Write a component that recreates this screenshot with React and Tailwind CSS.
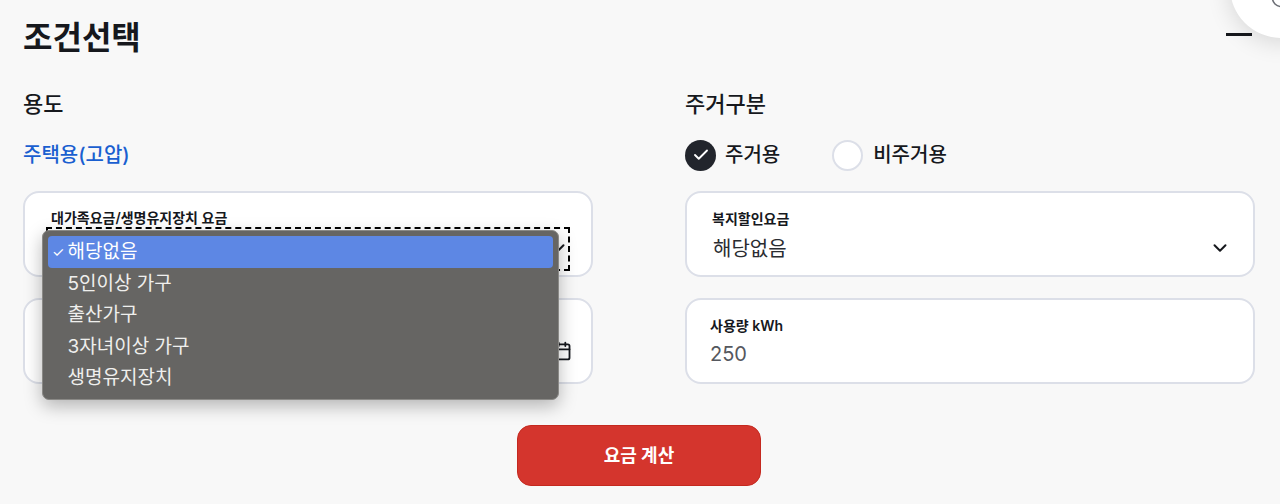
import React from "react";
import { ChevronDown, Calendar, Check } from "lucide-react";

const items = ["해당없음", "5인이상 가구", "출산가구", "3자녀이상 가구", "생명유지장치"];

function Card({ label, children, icon, labelClass }) {
    return (
        <div className="relative h-[86px] rounded-[16px] border-2 border-[#dcdfe8] bg-white">
            <div className={"absolute text-[14px] font-semibold leading-[18px] text-[#16181d] " + labelClass}>
                {label}
            </div>
            {children}
            {icon}
        </div>
    );
}

function Popup() {
    return (
        <div className="absolute left-[19px] top-[39px] z-10 h-[170px] w-[517px] rounded-[7px] border border-[#8a8986] bg-[#666563] p-[5px] shadow-[0_6px_18px_rgba(0,0,0,0.28)]">
            {items.map((item, i) => (
                <div
                    key={item}
                    className={
                        i === 0
                            ? "relative h-[32px] rounded-[4px] bg-[#5d87e4] pl-[19.5px] text-[19px] leading-[31px] text-white"
                            : "h-[31.3px] pl-[19.5px] text-[19px] leading-[31px] text-[#efefed]"
                    }
                >
                    {i === 0 && <span className="absolute left-[4px] top-0 text-[14px]">✓</span>}
                    {item}
                </div>
            ))}
        </div>
    );
}

export default function App() {
    return (
        <div
            className="relative h-[504px] w-[1280px] overflow-hidden bg-[#f8f8f8] pl-[23px] pr-[25px] text-[#16181d]"
            style={{ fontFamily: '"Inter", "Noto Sans CJK KR", sans-serif' }}
        >
            {/* floating button at the corner */}
            <div className="absolute left-[1230px] top-[-64px] flex h-[102px] w-[102px] rounded-full bg-white shadow-[0_4px_24px_rgba(0,0,0,0.14)]">
                <svg className="absolute left-[41px] top-[53px]" width="20" height="20" viewBox="0 0 20 20" fill="none">
                    <circle cx="10" cy="9" r="8.5" stroke="#6b6e75" strokeWidth="1.6" />
                </svg>
            </div>

            <div className="flex h-[72px] items-center justify-between">
                <h1 className="pt-[4px] text-[32px] font-bold leading-none">조건선택</h1>
                <div className="mb-[3px] mr-[3px] h-[3px] w-[26px] bg-[#16181d]"></div>
            </div>

            <div className="grid grid-cols-2 gap-x-[92px]">
                <div>
                    <h2 className="mt-[17px] text-[22px] font-medium leading-[30px]">용도</h2>
                    <div className="mt-[21px] h-[30px] text-[20px] font-medium leading-[30px] text-[#1a5fd0]">주택용(고압)</div>
                </div>
                <div>
                    <h2 className="mt-[17px] text-[22px] font-medium leading-[30px]">주거구분</h2>
                    <div className="mt-[21px] flex h-[30px] items-center">
                        <span className="flex h-[31px] w-[31px] items-center justify-center rounded-full bg-[#22252c]">
                            <Check size={18} strokeWidth={2.5} color="white" />
                        </span>
                        <span className="ml-[9px] text-[20px] font-medium">주거용</span>
                        <span className="ml-[52px] h-[31px] w-[31px] rounded-full border-2 border-[#dcdfe8] bg-white"></span>
                        <span className="ml-[10px] text-[20px] font-medium">비주거용</span>
                    </div>
                </div>
            </div>

            <div className="relative mt-[21px] grid grid-cols-2 gap-x-[92px] gap-y-[21px]">
                <div className="relative">
                    <Card
                        label="대가족요금/생명유지장치 요금"
                        labelClass="left-[26px] top-[16px]"
                        icon={<ChevronDown className="absolute right-[22px] top-[44px]" size={22} strokeWidth={2.2} />}
                    />
                    <div className="absolute left-[23px] top-[36px] h-[44px] w-[524px] border-2 border-dashed border-black"></div>
                    <Popup />
                </div>
                <Card
                    label="복지할인요금"
                    labelClass="left-[25px] top-[17px]"
                    icon={<ChevronDown className="absolute right-[22px] top-[44px]" size={22} strokeWidth={2.2} />}
                >
                    <div className="absolute left-[26px] top-[41px] text-[20px] leading-[30px] text-[#2a2c31]">해당없음</div>
                </Card>
                <Card
                    label=""
                    labelClass=""
                    icon={<Calendar className="absolute right-[19px] top-[41px]" size={20} strokeWidth={2.2} />}
                />
                <Card label="사용량 kWh" labelClass="left-[23px] top-[17px]">
                    <div className="absolute left-[23px] top-[39px] text-[20px] leading-[30px] text-[#55585e]">250</div>
                </Card>
            </div>

            <div className="mt-[41px] flex justify-center">
                <button className="h-[61px] w-[244px] rounded-[14px] border border-[#c4291f] bg-[#d4352d] text-[18px] font-bold text-white">
                    요금 계산
                </button>
            </div>
        </div>
    );
}
